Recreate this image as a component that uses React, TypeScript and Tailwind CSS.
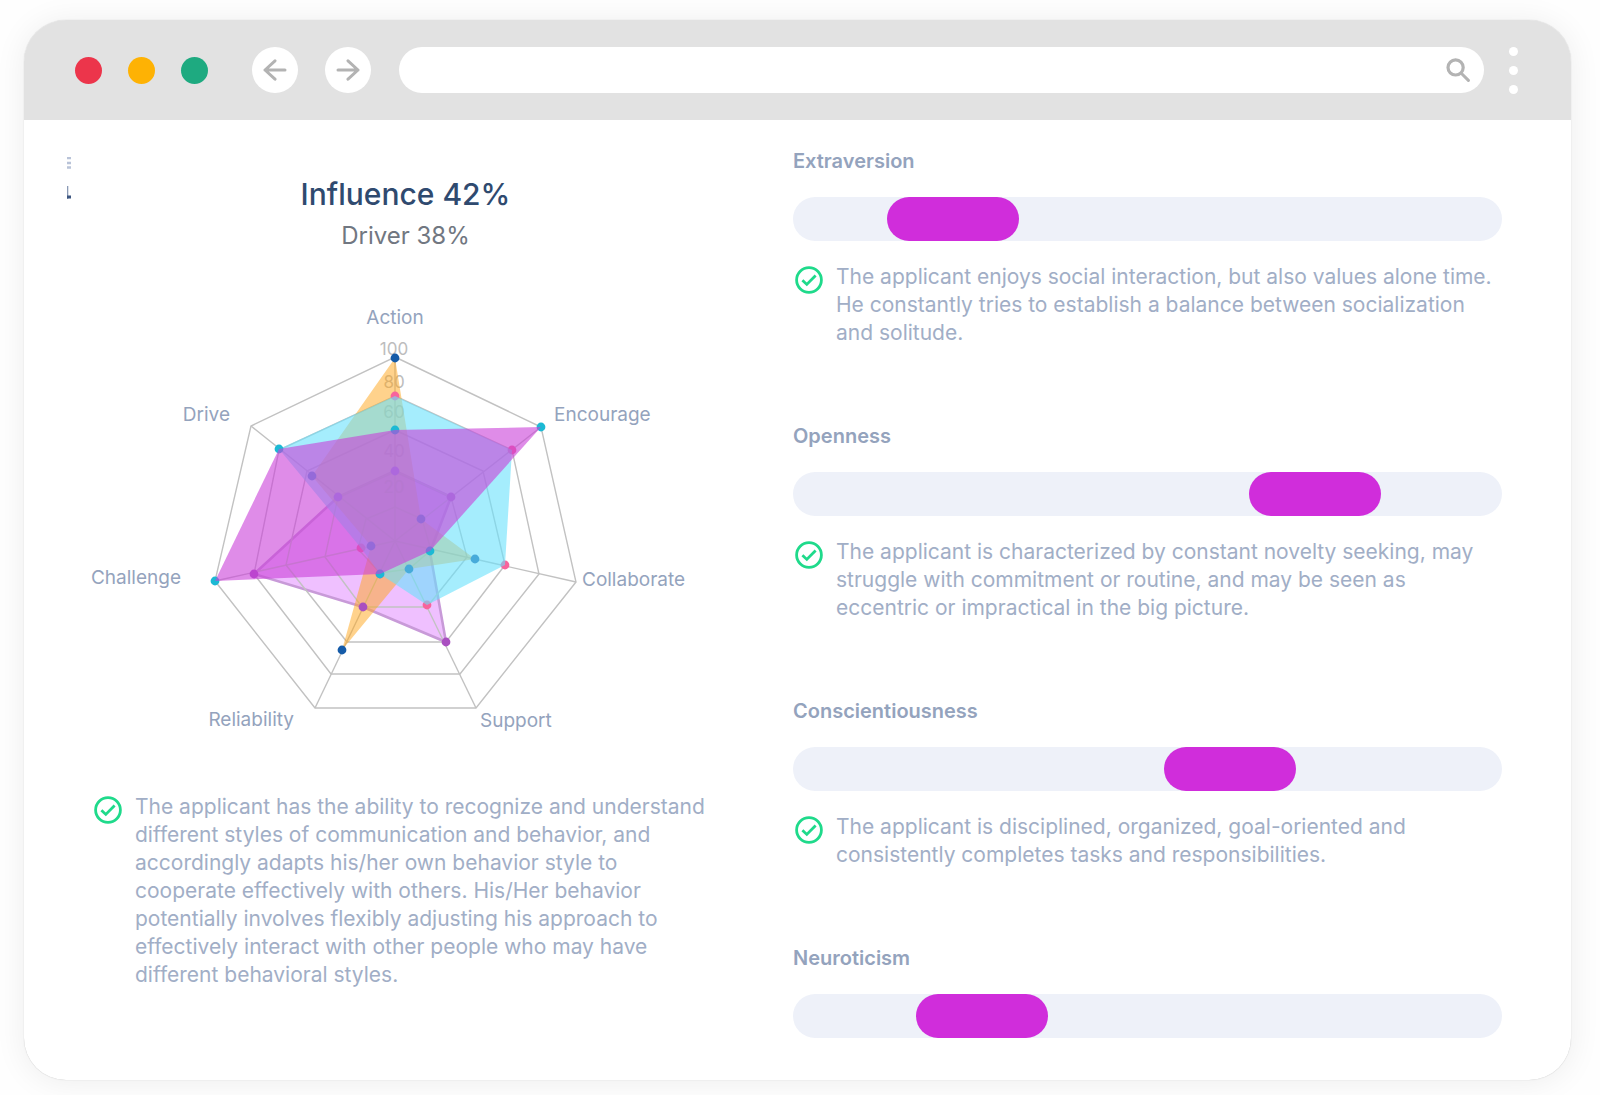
import React from "react";

type Point = [number, number];

const rings: Point[][] = [
  [[395, 357], [541, 427], [576, 582], [476, 708], [315, 708], [215, 581], [251, 426]],
  [[395, 396], [512, 450], [539, 574], [460, 674], [331, 674], [254, 574], [279, 450]],
  [[395, 430], [483, 471], [505, 565], [446, 642], [347, 642], [286, 565], [307, 471]],
  [[395, 471], [451, 497], [467, 557], [427, 607], [362, 607], [325, 557], [338, 497]],
  [[395, 507], [422, 519], [431, 550], [409, 569], [380, 573], [358, 549], [366, 519]],
];
const centre: Point = [395, 541];

const supportive: Point[] = [[395, 471], [451, 497], [430, 552], [446, 642], [363, 607], [254, 574], [338, 497]];
const orange: Point[] = [[395, 358], [421, 519], [475, 559], [409, 569], [342, 650], [371, 546], [312, 476]];
const cyan: Point[] = [[395, 396], [512, 450], [505, 565], [427, 605], [380, 574], [361, 548], [279, 449]];
const magenta: Point[] = [[395, 430], [541, 427], [430, 551], [380, 574], [215, 581], [279, 449]];

const toPoints = (pts: Point[]) => pts.map((p) => p.join(",")).join(" ");

function Dots({ pts, color }: { pts: Point[]; color: string }) {
  return (
    <g fill={color}>
      {pts.map(([x, y]) => (
        <circle key={`${x}-${y}`} cx={x} cy={y} r={4.4} />
      ))}
    </g>
  );
}

const labels: { text: string; x: number; y: number; anchor: "start" | "middle" | "end" }[] = [
  { text: "Action", x: 395, y: 324, anchor: "middle" },
  { text: "Encourage", x: 554, y: 421, anchor: "start" },
  { text: "Collaborate", x: 582, y: 586, anchor: "start" },
  { text: "Support", x: 480, y: 727, anchor: "start" },
  { text: "Reliability", x: 294, y: 726, anchor: "end" },
  { text: "Challenge", x: 181, y: 584, anchor: "end" },
  { text: "Drive", x: 230, y: 421, anchor: "end" },
];

const ticks: [string, number][] = [["100", 355], ["80", 388], ["60", 418], ["40", 457], ["20", 493]];

function RadarChart() {
  return (
    <svg viewBox="24 290 763 450" className="block w-full" role="img" aria-label="Behavioral style radar chart">
      <polygon points={toPoints(supportive)} fill="#efc0ff" stroke="#c89ad8" strokeWidth={2.6} />
      <g fill="none" stroke="#c2c2c2" strokeWidth={1.4}>
        {rings.map((r, i) => (
          <polygon key={i} points={toPoints(r)} />
        ))}
        {rings[0].map(([x, y]) => (
          <line key={`${x}-${y}`} x1={centre[0]} y1={centre[1]} x2={x} y2={y} />
        ))}
      </g>
      <g className="text-[17px]" fill="#bdbdbd" textAnchor="middle">
        {ticks.map(([t, y]) => (
          <text key={t} x={394} y={y}>{t}</text>
        ))}
      </g>
      <polygon points={toPoints(orange)} fill="#ffa519" fillOpacity={0.5} />
      <Dots pts={supportive.filter((_, i) => i !== 2)} color="#a94fc0" />
      <Dots pts={orange} color="#155ba8" />
      <Dots pts={cyan.slice(0, 6)} color="#f8649c" />
      <polygon points={toPoints(cyan)} fill="#69e1fc" fillOpacity={0.6} />
      <Dots pts={magenta} color="#1cb9d4" />
      <polygon points={toPoints(magenta)} fill="#ca3fd9" fillOpacity={0.6} />
      <g className="text-[19px]" fill="#94a3bd">
        {labels.map((l) => (
          <text key={l.text} x={l.x} y={l.y} textAnchor={l.anchor}>{l.text}</text>
        ))}
      </g>
    </svg>
  );
}

function CheckIcon() {
  return (
    <svg viewBox="0 0 28 28" className="mt-[3px] size-7 shrink-0" fill="none" stroke="#1fda8b" strokeWidth={2.8} aria-hidden="true">
      <circle cx="14" cy="14" r="12.4" />
      <path d="M7.4 14.2 L11.8 18.4 L20.6 9.4" />
    </svg>
  );
}

function Note({ lines }: { lines: string[] }) {
  return (
    <div className="flex gap-[13px]">
      <CheckIcon />
      <p className="text-[21px] leading-7 whitespace-nowrap text-[#a1aec6]">
        {lines.map((l) => (
          <span key={l} className="block">{l} </span>
        ))}
      </p>
    </div>
  );
}

const traits = [
  {
    name: "Extraversion",
    start: 94 / 710,
    lines: [
      "The applicant enjoys social interaction, but also values alone time.",
      "He constantly tries to establish a balance between socialization",
      "and solitude.",
    ],
  },
  {
    name: "Openness",
    start: 457 / 710,
    lines: [
      "The applicant is characterized by constant novelty seeking, may",
      "struggle with commitment or routine, and may be seen as",
      "eccentric or impractical in the big picture.",
    ],
  },
  {
    name: "Conscientiousness",
    start: 372 / 710,
    lines: [
      "The applicant is disciplined, organized, goal-oriented and",
      "consistently completes tasks and responsibilities.",
    ],
  },
  { name: "Neuroticism", start: 123 / 710, lines: [] as string[] },
];

function Trait({ name, start, lines }: { name: string; start: number; lines: string[] }) {
  return (
    <section className="flex flex-col gap-[22px]">
      <h3 className="text-xl leading-7 font-semibold text-[#94a3bd]">{name}</h3>
      <div className="h-11 overflow-hidden rounded-full bg-[#eef1f9]">
        <div className="h-full w-[18.6%] rounded-full bg-[#d02ddb]" style={{ marginLeft: `${start * 100}%` }} />
      </div>
      {lines.length > 0 && (
        <div className="pl-[2px]">
          <Note lines={lines} />
        </div>
      )}
    </section>
  );
}

function BrowserBar() {
  return (
    <header className="flex h-[100px] items-center bg-[#e2e2e2] pr-[53px] pl-[51px]">
      <div className="flex gap-[26px]">
        <span className="size-[27px] rounded-full bg-[#ec354b]" />
        <span className="size-[27px] rounded-full bg-[#feb204]" />
        <span className="size-[27px] rounded-full bg-[#1eaa80]" />
      </div>
      <div className="ml-11 flex gap-[27px]">
        <button aria-label="Back" className="flex size-[46px] items-center justify-center rounded-full bg-white">
          <svg viewBox="0 0 24 24" className="size-6" fill="none" stroke="#b3b3b3" strokeWidth={3} strokeLinecap="round" strokeLinejoin="round">
            <path d="M22 12H2M12 2.8L2 12L12 21.2" />
          </svg>
        </button>
        <button aria-label="Forward" className="flex size-[46px] items-center justify-center rounded-full bg-white">
          <svg viewBox="0 0 24 24" className="size-6" fill="none" stroke="#b3b3b3" strokeWidth={3} strokeLinecap="round" strokeLinejoin="round">
            <path d="M2 12H22M12 2.8L22 12L12 21.2" />
          </svg>
        </button>
      </div>
      <div className="ml-7 flex h-[46px] flex-1 items-center rounded-full bg-white pr-[14px] pl-6">
        <input type="text" aria-label="Address" className="min-w-0 flex-1 bg-transparent text-lg text-gray-600 outline-none" />
        <button aria-label="Search">
          <svg viewBox="0 0 24 24" className="block size-6" fill="none" stroke="#b3b3b3" strokeLinecap="round">
            <circle cx="9.6" cy="9.4" r="7.6" strokeWidth={3.2} />
            <path d="M15.5 15.5L22.4 22.4" strokeWidth={3} />
          </svg>
        </button>
      </div>
      <button aria-label="Menu" className="ml-[25px] flex flex-col gap-[10px]">
        <span className="size-[9px] rounded-full bg-white" />
        <span className="size-[9px] rounded-full bg-white" />
        <span className="size-[9px] rounded-full bg-white" />
      </button>
    </header>
  );
}

export default function App() {
  return (
    <div className="min-h-screen bg-[#fefefe] px-6 pt-5 pb-[14px] pr-[29px] font-['Inter',sans-serif]">
      <div className="overflow-hidden rounded-[42px] bg-white shadow-[0_0_1px_rgba(0,0,0,0.25),0_2px_32px_rgba(0,0,0,0.07)]">
        <BrowserBar />
        <main className="grid grid-cols-[763fr_784fr] pb-[42px]">
          <div className="relative pt-[52px]">
            <svg viewBox="0 0 4 42" className="absolute top-[37px] left-[43px] h-[42px] w-1" aria-hidden="true">
              <path d="M0 1H4M0 6H4M0 10.5H4" stroke="#b9c3d8" strokeWidth={2.4} />
              <path d="M0.5 29V42" stroke="#8b9ab5" strokeWidth={1.6} />
              <path d="M0 40H4" stroke="#3d5680" strokeWidth={3} />
            </svg>
            <h1 className="text-center text-[30px] leading-[44px] font-medium text-[#2f4a6f]">Influence 42%</h1>
            <h2 className="text-center text-2xl leading-10 text-[#717781]">Driver 38%</h2>
            <div className="mt-[34px]">
              <RadarChart />
            </div>
            <div className="mt-[53px] pl-[70px]">
              <Note
                lines={[
                  "The applicant has the ability to recognize and understand",
                  "different styles of communication and behavior, and",
                  "accordingly adapts his/her own behavior style to",
                  "cooperate effectively with others. His/Her behavior",
                  "potentially involves flexibly adjusting his approach to",
                  "effectively interact with other people who may have",
                  "different behavioral styles.",
                ]}
              />
            </div>
          </div>
          <div className="flex flex-col gap-[75px] pt-[27px] pr-[69px] pl-[6px]">
            {traits.map((t) => (
              <Trait key={t.name} {...t} />
            ))}
          </div>
        </main>
      </div>
    </div>
  );
}
